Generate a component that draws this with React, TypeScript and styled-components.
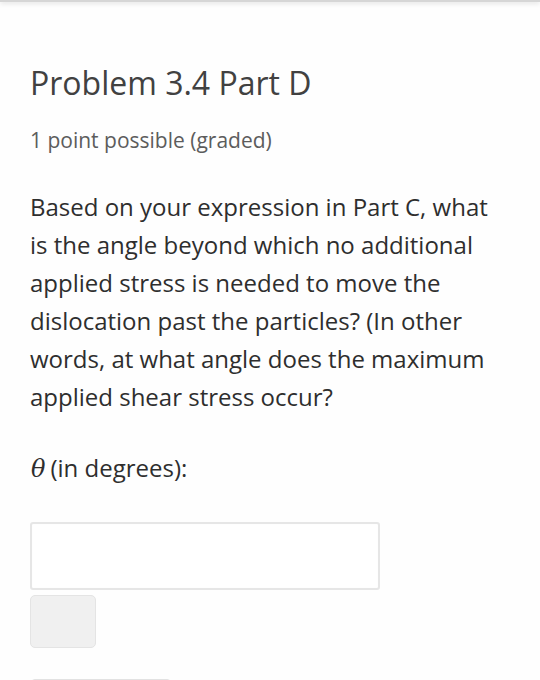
import styled, { createGlobalStyle } from "styled-components";

const GlobalStyle = createGlobalStyle`
  html, body {
    margin: 0;
    padding: 0;
    background: #ffffff;
  }
  body {
    font-family: "Open Sans", "Noto Sans", sans-serif;
    overflow: hidden;
  }
`

const Page = styled.div`
  width: 540px;
  height: 680px;
  overflow: hidden;
  background: #fefefe;
`

const TopShadow = styled.div`
  height: 2px;
  background: #d6d6d6;
  box-shadow: 0 1px 5px rgba(0, 0, 0, 0.2);
`

const Content = styled.div`
  padding: 61px 0 0 30px;
  display: flex;
  flex-direction: column;
  align-items: flex-start;
`

const Title = styled.h2`
  margin: 0;
  font-size: 32px;
  font-weight: 400;
  line-height: 40px;
  color: #414141;
`

const Points = styled.div`
  margin-top: 23px;
  font-size: 21px;
  line-height: 28px;
  color: #5c5c5c;
`

const Question = styled.p`
  margin: 34px 0 0;
  width: 470px;
  font-size: 24px;
  line-height: 38px;
  color: #2e2e2e;
`

const Label = styled.label`
  margin-top: 33px;
  font-size: 24px;
  line-height: 38px;
  color: #2e2e2e;
`

const Theta = styled.i`
  font-family: "DejaVu Serif", "Liberation Serif", serif;
  font-size: 24px;
  margin: 0 5px 0 1px;
`

const AnswerInput = styled.input`
  margin-top: 34px;
  width: 350px;
  height: 68px;
  box-sizing: border-box;
  border: 2px solid #e6e6e6;
  border-radius: 3px;
  background: #ffffff;
  box-shadow: inset 0 0 1px rgba(0, 0, 0, 0.06);
  outline: none;
`

const SubmitButton = styled.button`
  margin-top: 5px;
  width: 66px;
  height: 53px;
  box-sizing: border-box;
  border: 1px solid #e4e4e4;
  border-radius: 5px;
  background: #f0f0f0;
`

const NextBox = styled.div`
  margin-top: 31px;
  width: 142px;
  height: 30px;
  box-sizing: border-box;
  border: 1px solid #e2e2e2;
  border-radius: 5px;
  background: #fafafa;
`

export default function App() {
  return (
    <>
      <GlobalStyle />
      <Page>
        <TopShadow />
        <Content>
          <Title>Problem 3.4 Part D</Title>
          <Points>1 point possible (graded)</Points>
          <Question>
            Based on your expression in Part C, what is the angle beyond which no additional
            applied stress is needed to move the dislocation past the particles? (In other
            words, at what angle does the maximum applied shear stress occur?
          </Question>
          <Label>
            <Theta>θ</Theta>(in degrees):
          </Label>
          <AnswerInput aria-label="theta in degrees" />
          <SubmitButton aria-label="submit" />
          <NextBox />
        </Content>
      </Page>
    </>
  );
}
